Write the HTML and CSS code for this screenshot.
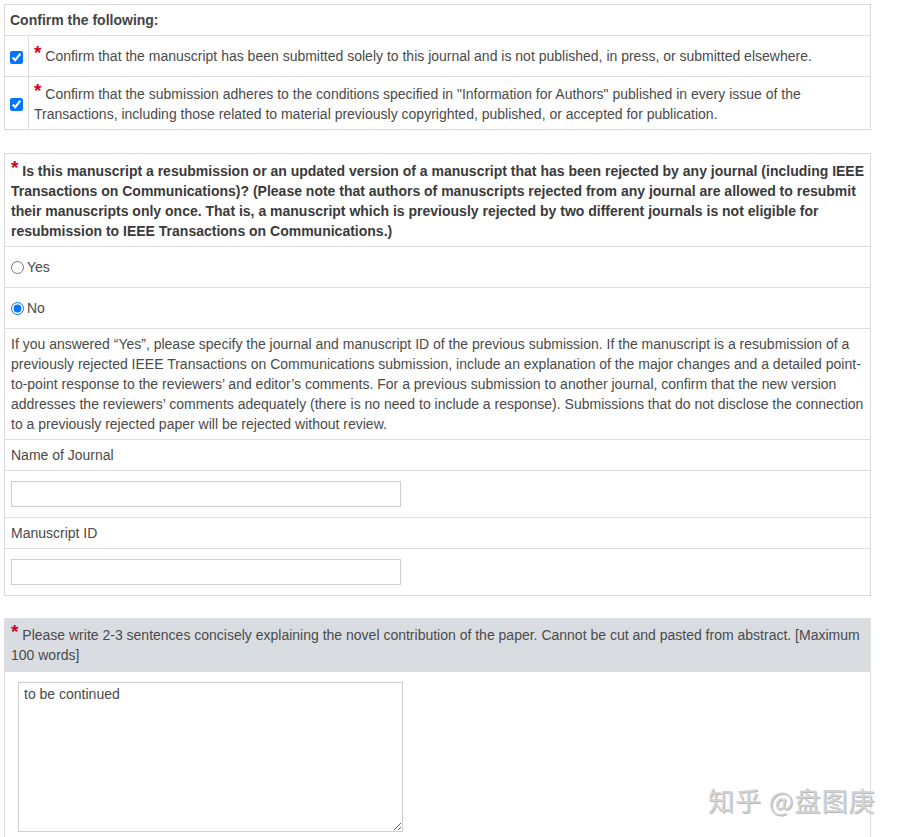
FILE: index.html
```html
<!DOCTYPE html>
<html>
<head>
<meta charset="utf-8">
<link rel="stylesheet" href="styles.css">
</head>
<body>
<div class="page">
  <div class="box confirm">
    <div class="row head">Confirm the following:</div>
    <div class="row check-row one">
      <div class="cb-cell"><input type="checkbox" checked></div>
      <div class="txt-cell"><span class="req">*</span> Confirm that the manuscript has been submitted solely to this journal and is not published, in press, or submitted elsewhere.</div>
    </div>
    <div class="row check-row two">
      <div class="cb-cell"><input type="checkbox" checked></div>
      <div class="txt-cell"><span class="req">*</span> Confirm that the submission adheres to the conditions specified in "Information for Authors" published in every issue of the Transactions, including those related to material previously copyrighted, published, or accepted for publication.</div>
    </div>
  </div>

  <div class="box resub">
    <div class="row question"><span class="req">*</span> Is this manuscript a resubmission or an updated version of a manuscript that has been rejected by any journal (including IEEE Transactions on Communications)? (Please note that authors of manuscripts rejected from any journal are allowed to resubmit their manuscripts only once. That is, a manuscript which is previously rejected by two different journals is not eligible for resubmission to IEEE Transactions on Communications.)</div>
    <div class="row opt"><label><input type="radio" name="r">Yes</label></div>
    <div class="row opt"><label><input type="radio" name="r" checked>No</label></div>
    <div class="row info">If you answered “Yes”, please specify the journal and manuscript ID of the previous submission. If the manuscript is a resubmission of a previously rejected IEEE Transactions on Communications submission, include an explanation of the major changes and a detailed point-to-point response to the reviewers’ and editor’s comments. For a previous submission to another journal, confirm that the new version addresses the reviewers’ comments adequately (there is no need to include a response). Submissions that do not disclose the connection to a previously rejected paper will be rejected without review.</div>
    <div class="row label">Name of Journal</div>
    <div class="row field"><input type="text"></div>
    <div class="row label">Manuscript ID</div>
    <div class="row field"><input type="text"></div>
  </div>

  <div class="box novel">
    <div class="novel-head"><span class="req">*</span> Please write 2-3 sentences concisely explaining the novel contribution of the paper. Cannot be cut and pasted from abstract. [Maximum 100 words]</div>
    <div class="novel-body"><textarea>to be continued</textarea></div>
  </div>
</div>
<div class="watermark">知乎 @盘图庚</div>
</body>
</html>
```

FILE: styles.css
```css
html, body {
  margin: 0;
  padding: 0;
  background: #fff;
}
body {
  font-family: "Liberation Sans", Arial, sans-serif;
  font-size: 14px;
  line-height: 20px;
  color: #4a4a4a;
}
.page {
  padding: 4px 0 0 4px;
  width: 867px;
}
.box {
  border: 1px solid #d8d8d8;
}
.row {
  border-top: 1px solid #dedede;
}
.row:first-child {
  border-top: none;
}
.req {
  color: #d0021b;
  font-size: 19px;
  font-weight: bold;
  position: relative;
  top: -2px;
  line-height: 0;
}
.confirm .head {
  height: 30px;
  padding: 5px 0 0 5px;
  box-sizing: border-box;
  font-weight: bold;
  color: #444;
}
.check-row {
  display: flex;
}
.cb-cell {
  width: 23px;
  border-right: 1px solid #dedede;
  display: flex;
  align-items: center;
  justify-content: center;
  flex: none;
}
.cb-cell input {
  margin: 0;
  width: 13px;
  height: 13px;
  position: relative;
  top: 1px;
}
.txt-cell {
  padding: 0 10px 0 5px;
}
.check-row.one { height: 40px; }
.check-row.one .txt-cell { padding-top: 10px; }
.check-row.two { height: 52px; }
.check-row.two .txt-cell { padding-top: 7px; }

.resub {
  margin-top: 23px;
}
.question {
  font-weight: bold;
  color: #3a3a3a;
  padding: 7px 4px 5px 6px;
}
.opt {
  height: 40px;
  display: flex;
  align-items: center;
  padding-left: 6px;
}
.opt label {
  display: flex;
  align-items: center;
}
.opt input {
  margin: 1px 3px 0 0;
  width: 13px;
  height: 13px;
}
.info {
  padding: 5px 4px 5px 6px;
}
.label {
  height: 31px;
  padding: 5px 0 0 6px;
  box-sizing: border-box;
}
.field {
  height: 47px;
  padding: 10px 0 0 6px;
  box-sizing: border-box;
}
.field input {
  display: block;
  width: 390px;
  height: 26px;
  box-sizing: border-box;
  border: 1px solid #cfcfcf;
  margin: 0;
  padding: 2px 4px;
}
.novel {
  margin-top: 22px;
  border-color: #e0e0e0;
  border-bottom: none;
  height: 240px;
}
.novel-head {
  background: #d9dde2;
  padding: 6px 8px 7px 6px;
  color: #4a4a4a;
}
.novel-body {
  padding: 10px 0 0 13px;
}
.novel-body textarea {
  display: block;
  width: 385px;
  height: 150px;
  box-sizing: border-box;
  border: 1px solid #cfcfcf;
  margin: 0;
  padding: 3px 5px;
  font-family: "Liberation Sans", Arial, sans-serif;
  font-size: 14px;
  line-height: 17px;
  color: #4a4a4a;
  resize: both;
}
.watermark {
  position: absolute;
  left: 708px;
  top: 782px;
  font-family: "Noto Sans CJK SC", sans-serif;
  font-size: 26px;
  line-height: 36px;
  color: #d4d4d4;
  text-shadow: 1px 1px 0 #b8b8b8;
  letter-spacing: 1px;
}
```
